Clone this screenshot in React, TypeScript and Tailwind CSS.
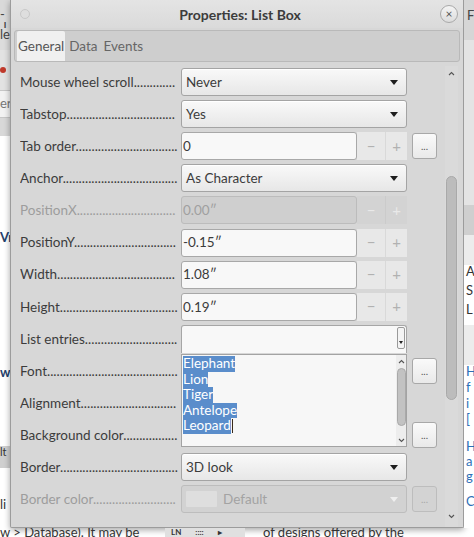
import React, { useLayoutEffect, useRef, useState } from "react";

type Row =
  | { kind: "select"; label: string; value: string; disabled?: boolean; swatch?: boolean; more?: boolean }
  | { kind: "spin"; label: string; value: string; disabled?: boolean; more?: boolean }
  | { kind: "entries"; label: string }
  | { kind: "blank"; label: string; more?: boolean };

const rows: Row[] = [
  { kind: "select", label: "Mouse wheel scroll", value: "Never" },
  { kind: "select", label: "Tabstop", value: "Yes" },
  { kind: "spin", label: "Tab order", value: "0", more: true },
  { kind: "select", label: "Anchor", value: "As Character" },
  { kind: "spin", label: "PositionX", value: "0.00″", disabled: true },
  { kind: "spin", label: "PositionY", value: "-0.15″" },
  { kind: "spin", label: "Width", value: "1.08″" },
  { kind: "spin", label: "Height", value: "0.19″" },
  { kind: "entries", label: "List entries" },
  { kind: "blank", label: "Font", more: true },
  { kind: "blank", label: "Alignment" },
  { kind: "blank", label: "Background color", more: true },
  { kind: "select", label: "Border", value: "3D look" },
  { kind: "select", label: "Border color", value: "Default", disabled: true, swatch: true, more: true },
];

const entries = ["Elephant", "Lion", "Tiger", "Antelope", "Leopard"];

export default function App() {
  return (
    <div className="h-[537px] w-[474px] overflow-hidden bg-white font-['Lato',sans-serif] text-[13.5px] text-[#3c3c3c]">
      <div className="flex h-[528px]">
        <LeftStrip />
        <Dialog />
        <RightStrip />
      </div>
      <BottomStrip />
    </div>
  );
}

function Dialog() {
  return (
    <div className="flex h-[528px] w-[454px] flex-col rounded-b-[2px] border-x border-b border-[#9c9c9c] bg-[#d7d7d7] shadow-[0_2px_6px_rgba(0,0,0,0.35)]">
      {/* title bar */}
      <div className="flex h-[28px] items-center justify-between bg-linear-to-b from-[#e4e4e4] to-[#dadada] pl-[9px] pr-[5px]">
        <div className="h-[10px] w-[10px] rounded-full border border-[#c8c8c8] bg-[#dedede]" />
        <span className="pl-[10px] pt-[1px] text-[14px] font-bold text-[#3c3c3c]">Properties: List Box</span>
        <div className="flex h-[18px] w-[18px] items-center justify-center rounded-full border border-[#a9a9a9] bg-linear-to-b from-[#f4f4f4] to-[#dcdcdc] text-[12px] leading-none text-[#555]">
          ×
        </div>
      </div>

      {/* tabs */}
      <div className="mx-[3px] mt-[2px] flex h-[32px] items-end rounded-[3px] border border-[#b9b9b9] bg-[#cecece] px-[2px]">
        <div className="flex h-[30px] items-center rounded-t-[2px] bg-[#f0f0f0] px-[1px] text-[#555]">General</div>
        <div className="flex h-[30px] items-center pl-[4px] text-[#666]">Data</div>
        <div className="flex h-[30px] items-center pl-[6px] text-[#666]">Events</div>
      </div>

      {/* content */}
      <div className="flex flex-1 pt-[4px]">
        <div className="relative w-[430px] pl-[9px]">
          {rows.map((r, i) => (
            <FormRow key={i} row={r} />
          ))}
          <EntriesPopup />
        </div>
        <OuterScrollbar />
      </div>
    </div>
  );
}

// label followed by dot leaders that fill up to the control column
function Label({ text, disabled }: { text: string; disabled?: boolean }) {
  const textRef = useRef<HTMLSpanElement>(null);
  const dotRef = useRef<HTMLSpanElement>(null);
  const [count, setCount] = useState(40);

  useLayoutEffect(() => {
    if (!textRef.current || !dotRef.current) return;
    const per = dotRef.current.getBoundingClientRect().width / 40;
    const avail = 158 - textRef.current.getBoundingClientRect().width;
    if (per > 0) setCount(Math.max(0, Math.floor(avail / per)));
  }, []);

  return (
    <div className={`w-[158px] shrink-0 overflow-hidden whitespace-nowrap ${disabled ? "text-[#9d9d9d]" : "text-[#3c3c3c]"}`}>
      <span ref={textRef}>{text}</span>
      <span ref={dotRef}>{".".repeat(count)}</span>
    </div>
  );
}

function FormRow({ row }: { row: Row }) {
  return (
    <div className="flex h-[32.1px] items-center">
      <Label text={row.label} disabled={"disabled" in row ? row.disabled : false} />
      <div className="ml-[3px] w-[226px] shrink-0">
        {row.kind === "select" && (
          <Select value={row.value} disabled={row.disabled} swatch={row.swatch} />
        )}
        {row.kind === "spin" && <Spin value={row.value} disabled={row.disabled} />}
        {row.kind === "entries" && (
          <div className="flex h-[28px] items-start justify-end rounded-t-[3px] border border-b-0 border-[#a6a6a6] bg-[#f8f8f8] pr-[1px] pt-[1px]">
            <div className="flex h-[22px] w-[8px] items-end justify-center rounded-[2px] border border-[#9a9a9a] bg-[#f4f4f4] pb-[4px]">
              <div className="h-0 w-0 border-x-[2px] border-t-[3px] border-x-transparent border-t-[#222]" />
            </div>
          </div>
        )}
      </div>
      {"more" in row && row.more && (
        <div className="ml-[5px]">
          <MoreButton disabled={"disabled" in row ? row.disabled : false} />
        </div>
      )}
    </div>
  );
}

function Select({ value, disabled, swatch }: { value: string; disabled?: boolean; swatch?: boolean }) {
  return (
    <div
      className={`flex h-[28px] items-center justify-between rounded-[3px] border pl-[4px] pr-[8px] ${
        disabled
          ? "border-[#bdbdbd] bg-[#d2d2d2] text-[#a3a3a3]"
          : "border-[#a4a4a4] bg-linear-to-b from-[#f9f9f9] to-[#e7e7e7] text-[#3c3c3c] shadow-[inset_0_1px_0_#ffffff]"
      }`}
    >
      <div className="flex items-center">
        {swatch && <div className="mr-[6px] h-[16px] w-[31px] rounded-[1px] bg-[#dedede]" />}
        <span>{value}</span>
      </div>
      <div
        className={`h-0 w-0 border-x-[4.5px] border-t-[5px] border-x-transparent ${
          disabled ? "border-t-[#efefef]" : "border-t-[#1e1e1e]"
        }`}
      />
    </div>
  );
}

function Spin({ value, disabled }: { value: string; disabled?: boolean }) {
  return (
    <div className="flex h-[28px]">
      <div
        className={`flex flex-1 items-center rounded-[3px] border pl-[1px] ${
          disabled ? "border-[#bcbcbc] bg-[#cfcfcf] text-[#a0a0a0]" : "border-[#a8a8a8] bg-[#f8f8f8] text-[#3c3c3c]"
        }`}
      >
        {value}
      </div>
      <div
        className={`flex w-[29px] items-center justify-center border-r text-[15px] ${
          disabled ? "border-[#cbcbcb] bg-[#d3d3d3] text-[#e9e9e9]" : "border-[#d9d9d9] bg-[#e8e8e8] text-[#b1b1b1]"
        }`}
      >
        −
      </div>
      <div
        className={`flex w-[21px] items-center justify-center text-[15px] ${
          disabled ? "bg-[#d3d3d3] text-[#e9e9e9]" : "bg-[#e8e8e8] text-[#b1b1b1]"
        }`}
      >
        +
      </div>
    </div>
  );
}

function MoreButton({ disabled }: { disabled?: boolean }) {
  return (
    <div
      className={`flex h-[26px] w-[25px] items-center justify-center rounded-[3px] border text-[10px] leading-none ${
        disabled
          ? "border-[#bdbdbd] bg-[#d3d3d3] text-[#a8a8a8]"
          : "border-[#a8a8a8] bg-linear-to-b from-[#fafafa] to-[#e9e9e9] text-[#555]"
      }`}
    >
      ...
    </div>
  );
}

function EntriesPopup() {
  return (
    <div className="absolute left-[170px] top-[288px] flex h-[93px] w-[226px] border border-[#a3a3a3] bg-[#f7f7f7]">
      <div className="flex-1 pl-[1px] pt-[1px] leading-[15.6px] text-white">
        {entries.map((e, i) => (
          <div key={e} className="flex items-center">
            <span className="bg-[#5a8dcb]">{e}</span>
            {i === entries.length - 1 && <span className="ml-[1px] h-[14px] w-[1.5px] bg-[#3a2a1a]" />}
          </div>
        ))}
      </div>
      <div className="flex w-[10px] flex-col items-center bg-[#ededed]">
        <Chevron up className="mt-[4px]" />
        <div className="mt-[4px] h-[58px] w-[9px] rounded-full border border-[#a9a9a9] bg-[#c2c2c2]" />
        <div className="flex-1" />
        <Chevron className="mb-[3px]" />
      </div>
    </div>
  );
}

function Chevron({ up, className = "" }: { up?: boolean; className?: string }) {
  return (
    <svg width="7" height="5" viewBox="0 0 7 5" className={className}>
      <path d={up ? "M1 4 L3.5 1.5 L6 4" : "M1 1 L3.5 3.5 L6 1"} fill="none" stroke="#555" strokeWidth="1.1" />
    </svg>
  );
}

function OuterScrollbar() {
  return (
    <div className="ml-[4px] flex w-[13px] flex-col items-center bg-[#dadada] pb-[8px]">
      <Chevron up className="mt-[5px]" />
      <div className="mt-[100px] h-[224px] w-[11px] rounded-full border border-[#a9a9a9] bg-[#bcbcbc]" />
      <div className="flex-1" />
      <Chevron />
    </div>
  );
}

function LeftStrip() {
  return (
    <div className="flex w-[10px] shrink-0 flex-col overflow-hidden text-[13px] leading-none">
      <div className="h-[28px] bg-[#d9d9d9] pt-[8px] text-[#444]">-&nbsp;L</div>
      <div className="h-[22px] bg-[#dcdcdc] text-[#444]">le</div>
      <div className="flex h-[40px] items-center bg-[#e2e2e2]">
        <div className="h-[6px] w-[6px] rounded-full bg-[#c0392b]" />
      </div>
      <div className="h-[28px] border-y border-[#c6c6c6] bg-[#f2f2f2] pt-[6px] text-[#777]">er</div>
      <div className="h-[18px] bg-[#d8d8d8]" />
      <div className="h-[95px] bg-white" />
      <div className="h-[20px] bg-white font-bold text-[#24406b]">Vr</div>
      <div className="h-[115px] bg-white" />
      <div className="h-[20px] bg-white font-bold text-[#24406b]">w</div>
      <div className="h-[60px] bg-white" />
      <div className="h-[22px] bg-[#cfcfcf] text-[11px] text-[#333]">lt</div>
      <div className="flex-1 bg-white pt-[30px] text-[#333]">li</div>
    </div>
  );
}

function RightStrip() {
  return (
    <div className="flex w-[10px] shrink-0 flex-col overflow-hidden text-[13px] leading-none">
      <div className="h-[40px] bg-[#d6d6d6] pt-[9px] pl-[3px] text-[#444]">F</div>
      <div className="h-[165px] bg-[#e4e4e4]" />
      <div className="h-[30px] bg-[#cfcfcf]" />
      <div className="h-[30px] bg-[#ececec]" />
      <div className="flex h-[60px] flex-col gap-[6px] bg-white pl-[2px] text-[#333]">
        <span>A</span>
        <span>S</span>
        <span>L</span>
      </div>
      <div className="h-[40px] bg-[#ececec]" />
      <div className="flex h-[75px] flex-col gap-[3px] bg-white pl-[2px] text-[#2d6fb7]">
        <span>H</span>
        <span>f</span>
        <span>i</span>
        <span>[</span>
      </div>
      <div className="flex h-[45px] flex-col gap-[2px] bg-white pl-[2px] text-[#2d6fb7]">
        <span>H</span>
        <span>a</span>
        <span>g</span>
      </div>
      <div className="flex-1 bg-white pl-[2px] pt-[10px] text-[#2d6fb7]">C</div>
    </div>
  );
}

function BottomStrip() {
  return (
    <div className="flex h-[9px] items-start overflow-hidden text-[13px] leading-[9px] text-[#333]">
      <span className="w-[165px] whitespace-nowrap">w &gt; Database). It may be</span>
      <div className="flex h-[9px] w-[80px] items-center gap-[14px] bg-[#e0e0e0] pl-[6px] text-[8px] font-bold">
        <span>LN</span>
        <span>::::</span>
        <span>▸</span>
      </div>
      <span className="ml-[18px] w-[200px] whitespace-nowrap">of designs offered by the</span>
    </div>
  );
}
